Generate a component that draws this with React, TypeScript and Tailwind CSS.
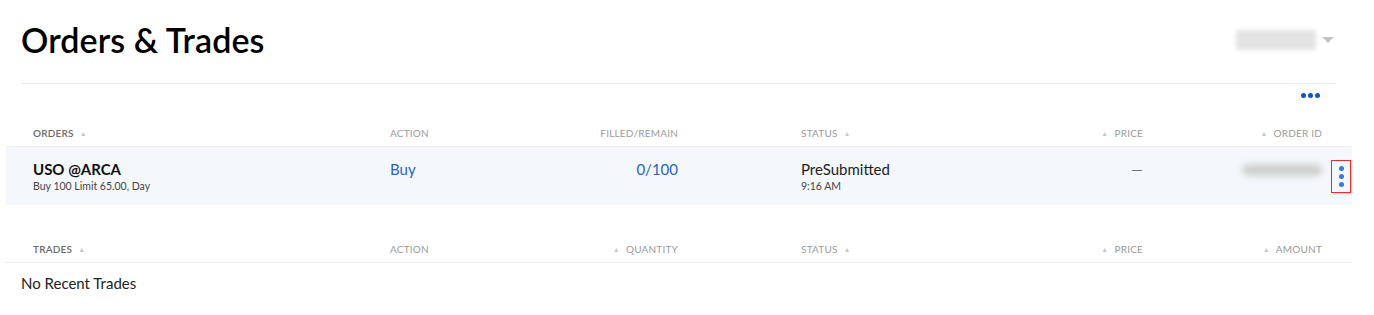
import React from "react";

const font = { fontFamily: "Lato, 'Open Sans', sans-serif" };

const SortUp = () => (
  <span className="inline-block text-[7px] leading-none text-[#c9c9c9] align-middle">▲</span>
);

const cols = "grid grid-cols-[357px_140px_148px_323px_142px_179px] pl-[27px] pr-[30px]";

const Orders: React.FC = () => {
  return (
    <div className="w-[1374px] h-[315px] bg-white text-[#111]" style={font}>
      {/* Title bar */}
      <div className="pl-[21px] pr-[38px]">
        <div className="flex items-center justify-between h-[84px] border-b border-[#ececec]">
          <h1 className="text-[34px] font-semibold tracking-[0.1px] text-black pb-[4px]">Orders &amp; Trades</h1>
          <div className="flex items-center gap-[6px] pb-[4px] mr-[2px]">
            <div className="w-[80px] h-[20px] rounded-sm bg-[#e3e3e3] blur-[2px]" />
            <span className="w-0 h-0 border-l-[6px] border-r-[6px] border-t-[6px] border-l-transparent border-r-transparent border-t-[#c4c4c4]" />
          </div>
        </div>
        <div className="flex justify-end h-[22px] items-center pr-[16px]">
          <div className="flex gap-[2px]">
            <span className="w-[5px] h-[5px] rounded-full bg-[#0d56c9]" />
            <span className="w-[5px] h-[5px] rounded-full bg-[#0d56c9]" />
            <span className="w-[5px] h-[5px] rounded-full bg-[#0d56c9]" />
          </div>
        </div>
      </div>

      <div className="ml-[6px] w-[1346px]">
        {/* Orders header */}
        <div className={`${cols} items-end h-[41px] pb-[5px] border-b border-[#ececec] text-[10px] uppercase text-[#9a9a9a] tracking-[0.2px]`}>
          <div className="text-[#6b6b6b] font-semibold flex items-center gap-[6px]">Orders <SortUp /></div>
          <div>Action</div>
          <div className="text-right">Filled/Remain</div>
          <div className="pl-[123px] flex items-center gap-[6px]">Status <SortUp /></div>
          <div className="flex items-center justify-end gap-[6px]"><SortUp /> Price</div>
          <div className="flex items-center justify-end gap-[6px]"><SortUp /> Order ID</div>
        </div>

        {/* Order row */}
        <div className={`${cols} relative items-center h-[58px] bg-[#f4f8fc]`}>
          <div className="pt-[2px]">
            <div className="text-[15px] font-bold leading-[18px] text-[#111]">USO @ARCA</div>
            <div className="text-[10.5px] leading-[16px] text-[#444]">Buy 100 Limit 65.00, Day</div>
          </div>
          <div className="text-[15px] text-[#2a64c5] pb-[14px]">Buy</div>
          <div className="text-[15px] text-[#2a64c5] text-right pb-[14px]">0/100</div>
          <div className="pl-[123px] pt-[2px]">
            <div className="text-[15px] leading-[18px] text-[#222]">PreSubmitted</div>
            <div className="text-[10.5px] leading-[16px] text-[#444]">9:16 AM</div>
          </div>
          <div className="text-right text-[15px] text-[#777] pb-[14px]">—</div>
          <div className="flex justify-end pb-[12px]">
            <div className="w-[80px] h-[12px] rounded-full bg-[#cfcfcf] blur-[3px]" />
          </div>
          <div className="absolute right-[1px] top-[13px] w-[20px] h-[33px] border border-[#e0312f] flex flex-col items-center justify-center gap-[3px] shadow-[1px_1px_2px_rgba(0,0,0,0.2)]">
            <span className="w-[5px] h-[5px] rounded-full bg-[#3b79d6]" />
            <span className="w-[5px] h-[5px] rounded-full bg-[#3b79d6]" />
            <span className="w-[5px] h-[5px] rounded-full bg-[#3b79d6]" />
          </div>
        </div>

        {/* Trades header */}
        <div className={`${cols} items-end h-[58px] pb-[5px] border-b border-[#ececec] text-[10px] uppercase text-[#9a9a9a] tracking-[0.2px]`}>
          <div className="text-[#6b6b6b] font-semibold flex items-center gap-[6px]">Trades <SortUp /></div>
          <div>Action</div>
          <div className="flex items-center justify-end gap-[6px]"><SortUp /> Quantity</div>
          <div className="pl-[123px] flex items-center gap-[6px]">Status <SortUp /></div>
          <div className="flex items-center justify-end gap-[6px]"><SortUp /> Price</div>
          <div className="flex items-center justify-end gap-[6px]"><SortUp /> Amount</div>
        </div>
      </div>

      <div className="pl-[21px] pt-[9px] text-[15px] text-[#222]">No Recent Trades</div>
    </div>
  );
};

export default Orders;
